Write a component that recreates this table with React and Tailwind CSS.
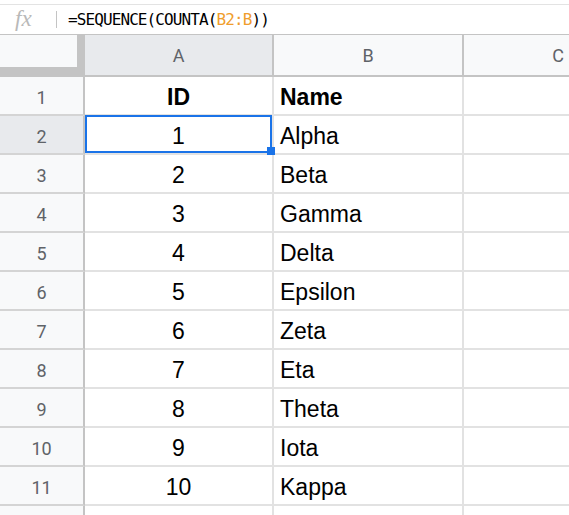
import React from "react";

const rows = [
  ["1", "ID", "Name", true],
  ["2", "1", "Alpha"],
  ["3", "2", "Beta"],
  ["4", "3", "Gamma"],
  ["5", "4", "Delta"],
  ["6", "5", "Epsilon"],
  ["7", "6", "Zeta"],
  ["8", "7", "Eta"],
  ["9", "8", "Theta"],
  ["10", "9", "Iota"],
  ["11", "10", "Kappa"],
  ["12", "", ""],
];

export default function App() {
  return (
    <div className="w-[569px] h-[515px] overflow-hidden bg-white relative">
      {/* formula bar */}
      <div className="pt-[4px]">
        <div className="h-[31px] border-t border-b border-t-[#e3e3e3] border-b-[#c4c4c4] flex items-center">
          <span
            className="ml-[15px] w-[24px] text-[23px] italic text-[#b9b9b9] leading-none -mt-[3px]"
            style={{ fontFamily: '"Liberation Serif", serif' }}
          >
            fx
          </span>
          <div className="ml-[17px] w-px h-[17px] bg-[#c4c4c4]" />
          <div
            className="ml-[11px] text-[16px] tracking-[-0.9px] text-black leading-none"
            style={{ fontFamily: '"DejaVu Sans Mono", monospace' }}
          >
            =SEQUENCE(COUNTA(<span className="text-[#f09d2c]">B2:B</span>))
          </div>
        </div>
      </div>

      {/* column headers */}
      <div className="flex h-[42px]" style={{ fontFamily: "Roboto, sans-serif" }}>
        <div className="w-[85px] shrink-0 bg-[#c4c4c4]">
          <div className="w-[77px] h-[32px] bg-[#f8f9fa]" />
        </div>
        <div className="w-[189px] shrink-0 bg-[#e8eaed] border-r-2 border-b-2 border-[#c4c4c4] flex items-center justify-center text-[18px] text-[#5f6368]">
          A
        </div>
        <div className="w-[190px] shrink-0 bg-[#f8f9fa] border-r-2 border-b-2 border-[#c4c4c4] flex items-center justify-center text-[18px] text-[#5f6368]">
          B
        </div>
        <div className="w-[190px] shrink-0 bg-[#f8f9fa] border-r-2 border-b-2 border-[#c4c4c4] flex items-center justify-center text-[18px] text-[#5f6368]">
          C
        </div>
      </div>

      {/* body */}
      {rows.map(([n, a, b, bold]) => (
        <div key={n} className="flex h-[39px]">
          <div
            className={`w-[85px] shrink-0 border-r-2 border-b-2 border-r-[#c4c4c4] border-b-[#d4d4d4] flex items-center justify-center pt-[3px] text-[18px] text-[#5f6368] ${
              n === "2" ? "bg-[#e8eaed]" : "bg-[#f8f9fa]"
            }`}
            style={{ fontFamily: "Roboto, sans-serif" }}
          >
            {n === "12" ? "" : n}
          </div>
          <div
            className={`relative w-[189px] shrink-0 border-r-2 border-b-2 border-[#e2e2e2] flex items-center justify-center pt-[3px] text-[23px] text-black ${
              bold ? "font-bold" : ""
            }`}
            style={{ fontFamily: '"Liberation Sans", Arial, sans-serif' }}
          >
            {a}
            {n === "2" && (
              <div className="absolute -top-[1px] left-0 right-0 bottom-0 border-2 border-[#1a73e8]">
                <div className="absolute -right-[5px] -bottom-[4px] w-[8px] h-[8px] bg-[#1a73e8]" />
              </div>
            )}
          </div>
          <div
            className={`w-[190px] shrink-0 border-r-2 border-b-2 border-[#e2e2e2] flex items-center pl-[6px] pt-[3px] text-[23px] text-black ${
              bold ? "font-bold" : ""
            }`}
            style={{ fontFamily: '"Liberation Sans", Arial, sans-serif' }}
          >
            {b}
          </div>
          <div className="w-[190px] shrink-0 border-r-2 border-b-2 border-[#e2e2e2]" />
        </div>
      ))}
    </div>
  );
}
